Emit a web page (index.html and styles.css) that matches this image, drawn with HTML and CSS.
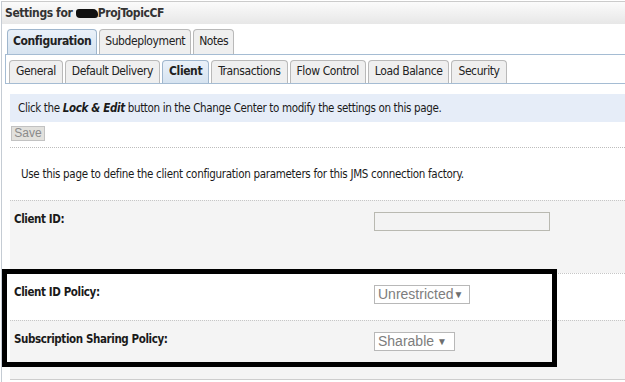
FILE: index.html
```html
<!DOCTYPE html>
<html>
<head>
<meta charset="utf-8">
<link rel="stylesheet" href="styles.css">
</head>
<body>
<div class="frame">
  <div class="titlebar"><span class="tprefix">Settings for </span><span class="redact"></span>ProjTopicCF</div>
  <div class="tabs1">
    <div class="tab tab1 active">Configuration</div>
    <div class="tab tab1">Subdeployment</div>
    <div class="tab tab1">Notes</div>
  </div>
  <div class="panel">
    <div class="tabs2">
      <div class="tab tab2">General</div>
      <div class="tab tab2">Default Delivery</div>
      <div class="tab tab2 active">Client</div>
      <div class="tab tab2">Transactions</div>
      <div class="tab tab2">Flow Control</div>
      <div class="tab tab2">Load Balance</div>
      <div class="tab tab2">Security</div>
    </div>
  </div>
  <div class="content">
    <div class="info">Click the <b><i>Lock &amp; Edit</i></b> button in the Change Center to modify the settings on this page.</div>
    <div class="btnrow"><button class="save" disabled>Save</button></div>
    <div class="intro">Use this page to define the client configuration parameters for this JMS connection factory.</div>
    <div class="row row-a h1">
      <div class="label">Client ID:</div>
      <div class="field"><div class="textbox"></div></div>
    </div>
    <div class="row h2">
      <div class="label">Client ID Policy:</div>
      <div class="field"><div class="select w1">Unrestricted<span class="arrow">&#9660;</span></div></div>
    </div>
    <div class="row row-a h3">
      <div class="label">Subscription Sharing Policy:</div>
      <div class="field"><div class="select w2">Sharable<span class="arrow">&#9660;</span></div></div>
    </div>
  </div>
</div>
<div class="annot"></div>
</body>
</html>
```
FILE: styles.css
```css
html, body {
  margin: 0;
  padding: 0;
  background: #fff;
  width: 625px;
  height: 382px;
  overflow: hidden;
}
body {
  position: relative;
  font-family: "DejaVu Sans Condensed", "DejaVu Sans", sans-serif;
  font-size: 11px;
  color: #1a1a1a;
}
.frame {
  margin-left: 1px;
  border-left: 1px solid #c5ccd4;
  height: 382px;
}
.titlebar {
  margin-top: 1px;
  height: 22px;
  line-height: 22px;
  border-top: 1px solid #cbcbcb;
  background: linear-gradient(#fbfbfb, #e7e7e7);
  padding-left: 3px;
  font-weight: bold;
  font-size: 12px;
  letter-spacing: -0.4px;
  color: #333;
}
.tprefix {
  letter-spacing: -0.4px;
}
.redact {
  display: inline-block;
  width: 22px;
  height: 9px;
  background: #111;
  border-radius: 3px 5px 3px 4px;
  vertical-align: -1px;
}
.tabs1 {
  margin-top: 5px;
  padding-left: 5px;
  display: flex;
  gap: 2px;
  height: 25px;
}
.tab {
  box-sizing: border-box;
  border: 1px solid #b9b9b9;
  border-bottom: none;
  border-radius: 4px 4px 0 0;
  background: #efefef;
  color: #222;
  font-size: 12px;
  letter-spacing: -0.4px;
  white-space: nowrap;
}
.tab.active {
  border-color: #9fb6cd;
  background: linear-gradient(#eaf1f9, #d6e3f0);
  font-weight: bold;
}
.tab1 {
  height: 25px;
  line-height: 23px;
  padding: 0 5px;
}
.panel {
  margin-left: 3px;
  border-top: 1px solid #a5bcd3;
  border-left: 1px solid #a5bcd3;
  border-bottom: 1px solid #a5bcd3;
  padding: 5px 0 0 3px;
}
.tabs2 {
  display: flex;
  gap: 2px;
  height: 23px;
}
.tab2 {
  height: 23px;
  line-height: 21px;
  padding: 0 6px;
}
.content {
  margin-left: 8px;
  padding-top: 10px;
}
.info {
  height: 28px;
  line-height: 28px;
  background: #e6edf8;
  padding-left: 8px;
  font-size: 11.5px;
  letter-spacing: -0.35px;
}
.btnrow {
  margin-top: 4px;
  height: 15px;
  padding-left: 1px;
}
.save {
  display: block;
  box-sizing: border-box;
  width: 34px;
  height: 15px;
  padding: 0;
  margin: 0;
  border: 1px solid #c2c2c2;
  background: #e2e1dd;
  color: #8a8a8a;
  font-family: "Liberation Sans", Arial, sans-serif;
  font-size: 12px;
  line-height: 13px;
}
.intro {
  margin-top: 6px;
  border-top: 1px dotted #bdbdbd;
  height: 52px;
  line-height: 52px;
  padding-left: 11px;
  font-size: 11.5px;
  letter-spacing: -0.3px;
}
.row {
  display: grid;
  grid-template-columns: 364px 1fr;
  border-top: 1px dotted #c6c6c6;
  box-sizing: border-box;
  padding-top: 11px;
}
.row-a { background: #f4f4f4; }
.h1 { height: 73px; }
.h2 { height: 47px; }
.h3 { height: 60px; border-bottom: 1px solid #cdcdcd; }
.label {
  padding-left: 4px;
  font-weight: bold;
  line-height: 14px;
  font-size: 11.5px;
  letter-spacing: -0.4px;
}
.textbox {
  box-sizing: border-box;
  width: 176px;
  height: 19px;
  border: 1px solid #b9b9b1;
  background: #f3f3f3;
}
.select {
  box-sizing: border-box;
  height: 19px;
  border: 1px solid #b8b8b8;
  background: #fff;
  color: #7d7d7d;
  font-family: "Liberation Sans", Arial, sans-serif;
  font-size: 14px;
  line-height: 17px;
  padding-left: 3px;
  display: flex;
  align-items: center;
  white-space: nowrap;
}
.w1 { width: 96px; }
.w2 { width: 81px; }
.arrow {
  font-size: 10px;
  color: #6e6e6e;
  margin-left: auto;
  margin-right: 7px;
}
.annot {
  position: absolute;
  left: 2px;
  top: 269px;
  width: 555px;
  height: 98px;
  box-sizing: border-box;
  border: 5px solid #000;
}
```
